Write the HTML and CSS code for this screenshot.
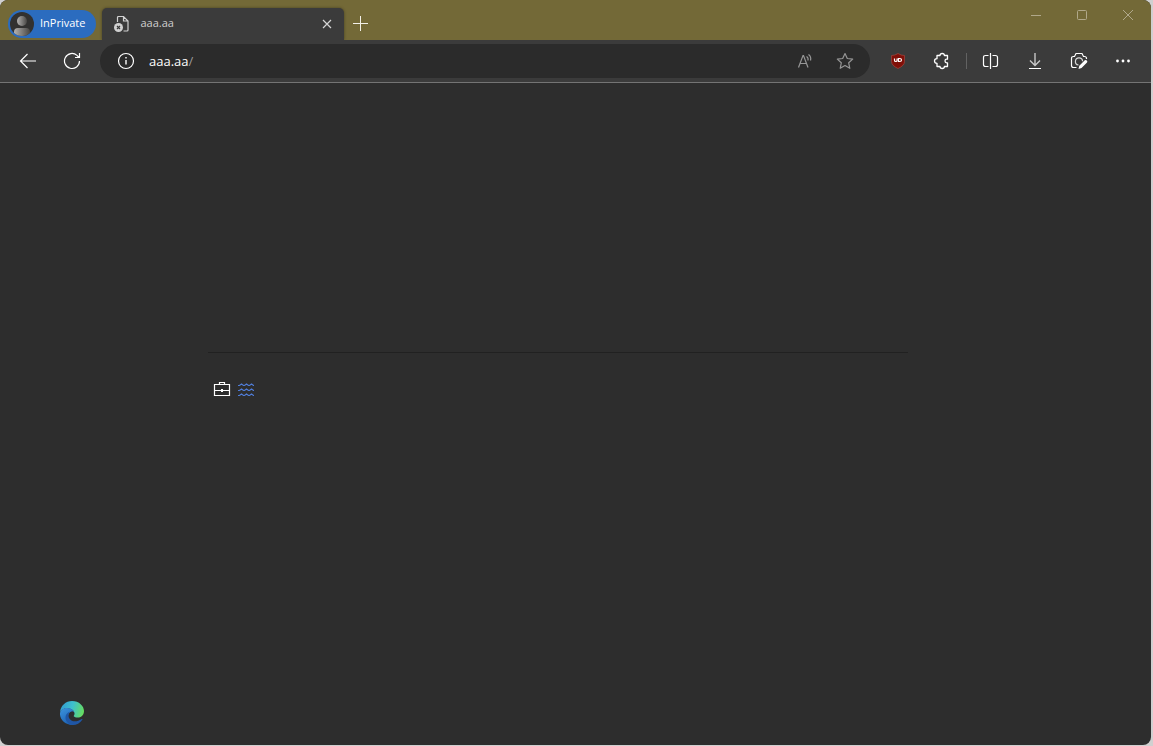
FILE: index.html
```html
<!DOCTYPE html>
<html lang="en">
<head>
<meta charset="utf-8">
<title>aaa.aa</title>
<link rel="stylesheet" href="styles.css">
</head>
<body>
<div class="window">
  <header class="titlebar">
    <button class="profile" type="button">
      <svg class="avatar" width="24" height="24" viewBox="0 0 24 24" aria-hidden="true">
        <defs>
          <linearGradient id="person" x1="0" x2="1"><stop offset="0" stop-color="#b4b2b0"/><stop offset="1" stop-color="#484644"/></linearGradient>
          <clipPath id="disc"><circle cx="12" cy="12" r="12"/></clipPath>
        </defs>
        <g clip-path="url(#disc)">
          <rect width="24" height="24" fill="#323130"/>
          <circle cx="12" cy="9" r="5" fill="url(#person)"/>
          <path d="M4 24v-4q0-4 4-4h8q4 0 4 4v4z" fill="url(#person)"/>
        </g>
      </svg>
      <span>InPrivate</span>
    </button>
    <div class="tab">
      <svg width="16" height="18" viewBox="0 0 16 18" fill="none" stroke="#d0d0d0" stroke-width="1.2" aria-hidden="true">
        <path d="M3.500 7V2.500q0-1 1-1h5l4.500 4.500v9q0 1-1 1H9.500M9.500 1.500V6H14"/>
        <circle cx="4.500" cy="12.500" r="4.500" fill="#d0d0d0" stroke="none"/>
        <path d="M3 11l3 3M6 11l-3 3" stroke="#3b3b3b" stroke-width="1.200"/>
      </svg>
      <span class="tab-title">aaa.aa</span>
      <button class="tab-close" type="button" aria-label="Close tab">
        <svg width="10" height="10" viewBox="0 0 10 10" stroke="#d6d6d6" stroke-width="1.200"><path d="M1 1l8 8M9 1l-8 8"/></svg>
      </button>
    </div>
    <button class="new-tab" type="button" aria-label="New tab">
      <svg width="15" height="15" viewBox="0 0 15 15" stroke="#f2f0e8"><path d="M7.500 0v15M0 7.500h15"/></svg>
    </button>
    <div class="captions">
      <button type="button" aria-label="Minimize"><svg width="12" height="12" viewBox="0 0 12 12" stroke="#b0a88a"><path d="M1 6.500h10"/></svg></button>
      <button type="button" aria-label="Maximize"><svg width="12" height="12" viewBox="0 0 12 12" fill="none" stroke="#b0a88a"><rect x="1.500" y="1.500" width="9" height="9" rx="1"/></svg></button>
      <button type="button" aria-label="Close"><svg width="12" height="12" viewBox="0 0 12 12" stroke="#b0a88a"><path d="M1 1l10 10M11 1L1 11"/></svg></button>
    </div>
  </header>

  <nav class="toolbar" aria-label="Browser toolbar">
    <button class="tool" type="button" aria-label="Back">
      <svg width="18" height="18" viewBox="0 0 18 18"><path d="M17 9H1.500M8.500 2l-7 7 7 7"/></svg>
    </button>
    <button class="tool" type="button" aria-label="Refresh">
      <svg width="18" height="18" viewBox="0 0 18 18"><path d="M16.500 9a7.500 7.500 0 1 1-2.500-5.600L16 5.500M16.500 1v4.500H12"/></svg>
    </button>
    <div class="address">
      <button class="info" type="button" aria-label="View site information">
        <svg width="18" height="18" viewBox="0 0 18 18"><circle cx="9" cy="9" r="7.500"/><path d="M9 8v4.500M9 5v1.500" stroke-width="1.400"/></svg>
      </button>
      <div class="url" role="textbox" aria-label="Address" contenteditable="true" spellcheck="false">aaa.aa<span class="slash">/</span></div>
      <button class="inner" type="button" aria-label="Read aloud">
        <svg width="18" height="18" viewBox="0 0 18 18"><path d="M2.500 15.500L7 3.500h.5l4.500 12M4 11.500h7M10.500 4.500q2 1 1.500 4M12.500 2.500q3 2.200 2 6"/></svg>
      </button>
      <button class="inner" type="button" aria-label="Add to favorites">
        <svg width="18" height="18" viewBox="0 0 18 18"><path stroke-linejoin="round" d="M9 1.500l2.300 5 5.400.6-4 3.700 1.100 5.500L9 13.600l-4.800 2.700 1.100-5.500-4-3.700 5.400-.6z"/></svg>
      </button>
    </div>
    <div class="tools">
      <button class="tool" type="button" aria-label="uBlock Origin">
        <svg width="16" height="16" viewBox="0 0 16 16"><path d="M8 .5q3 2 6.500 2v6q0 4-6.500 7-6.500-3-6.500-7v-6Q5 2.500 8 .5z" fill="#800f08" stroke="#a4463f" stroke-width=".7"/><path d="M4.500 5.500v1.700q0 1.300 1.300 1.300t1.300-1.300V5.500M8.500 8.500v-3h1.300q1.700 0 1.700 1.500t-1.700 1.500z" stroke="#fff" stroke-width="1.200"/></svg>
      </button>
      <button class="tool" type="button" aria-label="Extensions">
        <svg width="18" height="18" viewBox="0 0 18 18"><path stroke-linejoin="round" stroke-width="1.300" d="M4 3.500h3q0-2 2.200-2t2.200 2h3.100v3.700h-.8q-1.700 0-1.700 1.800t1.700 1.800h.8v3.700h-3.100q0 2-2.200 2t-2.200-2H4v-3.200q-2.500 0-2.500-2.300T4 6.700z"/></svg>
      </button>
      <span class="divider"></span>
      <button class="tool" type="button" aria-label="Split screen">
        <svg width="18" height="18" viewBox="0 0 18 18"><path d="M6.500 3.500h-3q-2 0-2 2v7q0 2 2 2h3M10.500 3.500h3q2 0 2 2v7q0 2-2 2h-3M8.500 1v16"/></svg>
      </button>
      <button class="tool" type="button" aria-label="Downloads">
        <svg width="18" height="18" viewBox="0 0 18 18"><path d="M9 1v12M4 8.500l5 5 5-5" stroke="#c8c8c8" stroke-width="1.400"/><path d="M3 16.500h12"/></svg>
      </button>
      <button class="tool" type="button" aria-label="Screenshot">
        <svg width="18" height="18" viewBox="0 0 18 18"><path d="M6.500 15.500H3.500q-2 0-2-2v-7q0-2 2-2h1L6 1.500h6l1.500 3h1q2 0 2 2V7"/><path stroke="#d8d8d8" d="M8.500 13A3.600 3.600 0 1 1 12.600 9.200"/><path d="M8.500 17l.8-3.200 5.500-5.500q1-.8 2 .2t.2 2L11.500 16z" fill="#fff" stroke="none"/></svg>
      </button>
      <button class="tool" type="button" aria-label="Settings and more">
        <svg width="18" height="18" viewBox="0 0 18 18"><g fill="#fff" stroke="none"><circle cx="3.500" cy="9" r="1.400"/><circle cx="9" cy="9" r="1.400"/><circle cx="14.500" cy="9" r="1.400"/></g></svg>
      </button>
    </div>
  </nav>

  <main class="page">
    <section class="games">
      <svg width="18" height="18" viewBox="0 0 18 18" fill="none" stroke="#fff" stroke-width="1.200" aria-hidden="true"><path d="M1.500 3.500h15v11h-15zM6.500 3.500v-2h5v2M1.500 9.500h15"/><rect x="8" y="8" width="2" height="3" fill="#fff" stroke="none"/></svg>
      <svg width="16" height="16" viewBox="0 0 16 16" fill="none" stroke="#4f7cd6" stroke-width="1.200" aria-hidden="true"><path d="M0 3.500h1.500l2-1.500 2 1.500h1l2-1.500 2 1.500h1l2-1.500 2 1.500h.5M0 8.500h1.500l2-1.500 2 1.500h1l2-1.500 2 1.500h1l2-1.500 2 1.500h.5M0 13.500h1.500l2-1.500 2 1.500h1l2-1.500 2 1.500h1l2-1.500 2 1.500h.5"/></svg>
    </section>
    <footer class="brand">
      <svg width="24" height="24" viewBox="0 0 256 256" role="img" aria-label="Microsoft Edge">
        <defs>
          <linearGradient id="top" x1="0" y1=".3" x2="1" y2=".5"><stop offset="0" stop-color="#329bd2"/><stop offset=".5" stop-color="#3ec0cd"/><stop offset="1" stop-color="#66dc60"/></linearGradient>
          <linearGradient id="side" x1="0" y1="0" x2=".5" y2="1"><stop offset="0" stop-color="#3c94dd"/><stop offset="1" stop-color="#1c63b5"/></linearGradient>
        </defs>
        <path fill="url(#top)" d="M1 119C5 50 62 0 128 0c76 0 128 54 128 107 0 47-35 70-68 70-25 0-42-10-42-17 0-4 9-8 9-27 0-25-29-57-78-57-41 0-67 21-76 43z"/>
        <path fill="url(#side)" d="M0 130c5-31 33-55 75-55 48 0 80 33 80 58-3-14-17-25-31-22-25 5-46 40-34 75 11 36 43 55 67 69-5 1-17 1-29 1C60 256-6 201 0 130z"/>
        <path fill="#1f56a5" d="M105 115c-15 20-20 40-10 63 14 31 49 43 82 37 27-5 45-20 54-23 7-3 11 2 7 8-24 36-61 56-103 56-51-7-80-48-76-86 3-28 20-47 46-55z"/>
      </svg>
    </footer>
  </main>
</div>
</body>
</html>
```
FILE: styles.css
```css
* {
  box-sizing: border-box;
}

body {
  margin: 0;
  padding: 0 2px 1px 0;
  background: #d0d0d0;
  font-family: "Open Sans", "Noto Sans", sans-serif;
}

button {
  display: flex;
  align-items: center;
  justify-content: center;
  margin: 0;
  padding: 0;
  border: 0;
  background: none;
  color: inherit;
  font: inherit;
}

.window {
  display: flex;
  flex-direction: column;
  min-height: calc(100vh - 1px);
  border-radius: 8px;
  overflow: hidden;
  background: #2d2d2d;
  color: #fff;
}

.titlebar {
  display: flex;
  height: 40px;
  padding-left: 8px;
  background: #736937;
}

.profile {
  align-self: flex-end;
  gap: 6px;
  height: 28px;
  margin-bottom: 2px;
  padding: 0 11px 0 2px;
  border-radius: 14px;
  background: #2b6cbf;
  font-size: 11px;
  line-height: 16px;
}

.profile span,
.tab-title {
  padding-bottom: 2px;
}

.tab {
  display: flex;
  align-items: center;
  align-self: flex-end;
  width: 242px;
  height: 32px;
  margin-left: 6px;
  padding: 0 12px;
  border-radius: 5px 5px 0 0;
  background: #3b3b3b;
  box-shadow: 0 0 3px #0006;
}

.tab-title {
  flex: 1;
  padding-left: 10px;
  color: #cfcfcf;
  font-size: 11px;
  line-height: 16px;
}

.new-tab {
  align-self: flex-end;
  width: 32px;
  height: 32px;
  padding-bottom: 1px;
}

.captions {
  display: flex;
  margin-left: auto;
}

.captions button {
  width: 46px;
  height: 30px;
}

.toolbar {
  position: relative;
  display: flex;
  align-items: center;
  height: 43px;
  padding: 0 6px;
  border-bottom: 1px solid #747474;
  background: #3b3b3b;
}

.toolbar svg {
  fill: none;
  stroke: #fff;
  stroke-width: 1.2;
}

.tool {
  width: 44px;
  height: 34px;
}

.address {
  display: flex;
  flex: 1;
  align-items: center;
  height: 34px;
  margin: 0 6px;
  padding: 0 5px 0 11px;
  border-radius: 17px;
  background: #2b2b2b;
}

.info {
  width: 30px;
  height: 30px;
}

.url {
  flex: 1;
  padding-left: 8px;
  font-size: 13px;
  line-height: 20px;
}

.slash {
  color: #9a9a9a;
}

.inner {
  width: 40px;
  height: 30px;
}

.toolbar .inner svg {
  stroke: #969696;
}

.tools {
  display: flex;
  align-items: center;
}

.divider {
  width: 1px;
  height: 16px;
  margin: 0 2px;
  background: #626262;
}

.page {
  display: flex;
  flex: 1;
  flex-direction: column;
  justify-content: space-between;
  padding: 269px 60px 20px;
}

.games {
  display: flex;
  align-items: center;
  gap: 7px;
  max-width: 700px;
  margin-left: 148px;
  padding: 28px 5px;
  border-top: 1px solid #212121;
}

.brand {
  display: flex;
}
```
